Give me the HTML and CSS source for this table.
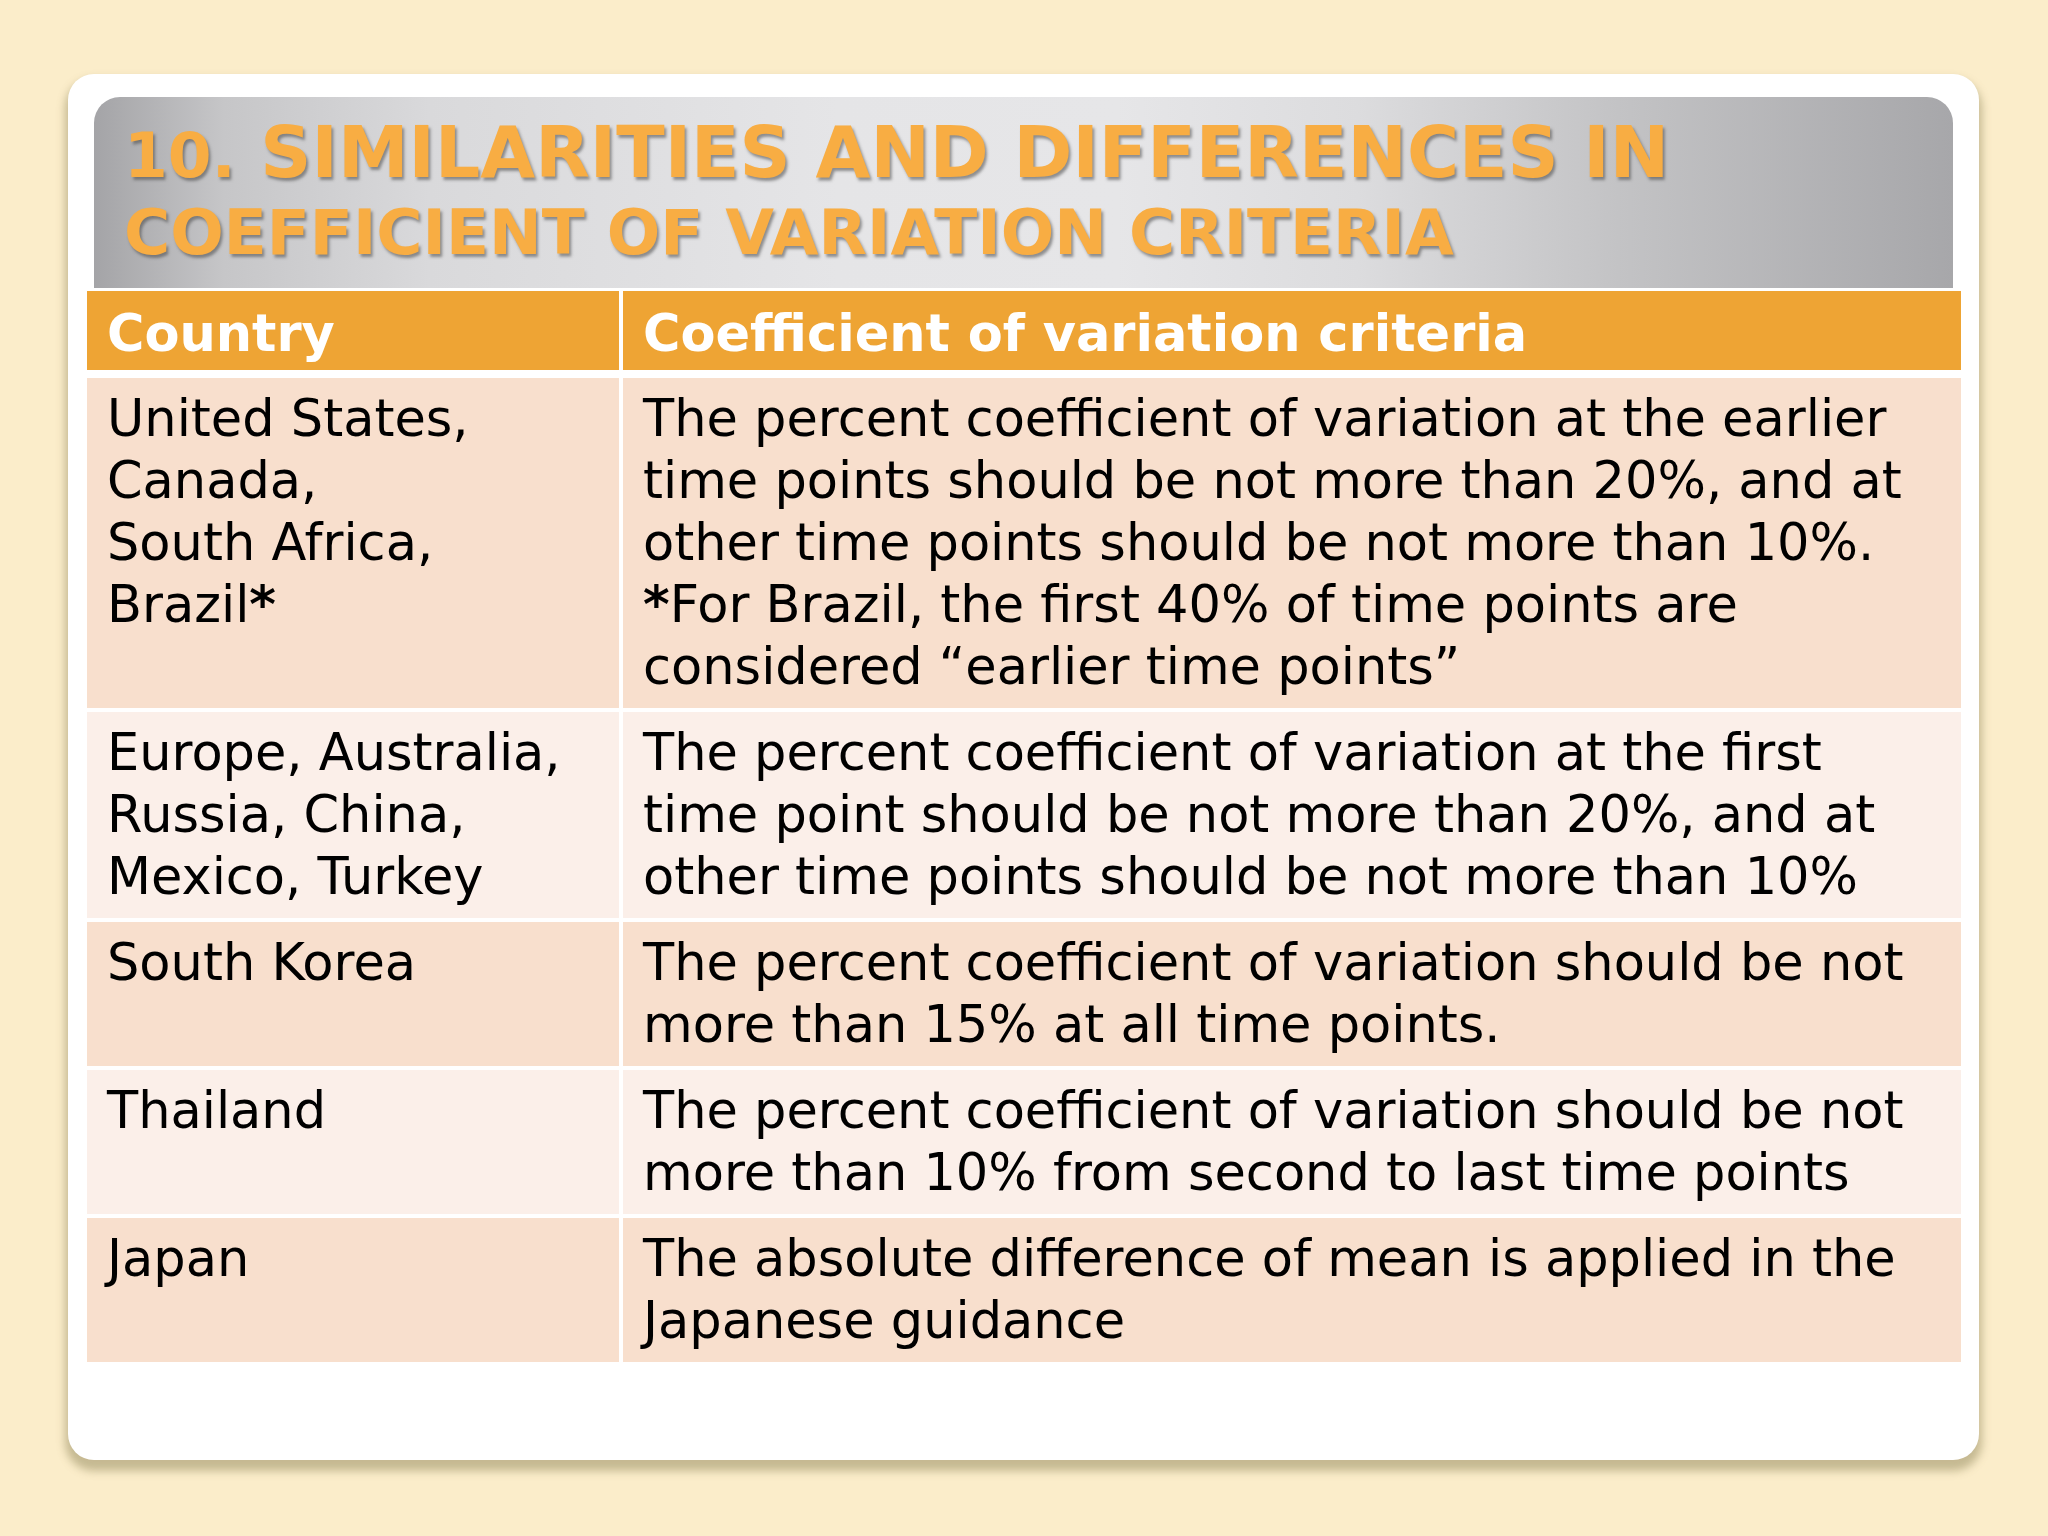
FILE: index.html
```html
<!DOCTYPE html>
<html lang="en">
<head>
<meta charset="utf-8">
<title>10. Similarities and differences in coefficient of variation criteria</title>
<link rel="stylesheet" href="styles.css">
</head>
<body>
<div class="slide">
  <div class="card">
    <div class="title-band">
      <h1 class="title"><span class="line1"><span class="num">10.</span> SIMILARITIES AND DIFFERENCES IN</span><span class="line2">COEFFICIENT OF VARIATION CRITERIA</span></h1>
    </div>
    <div class="table">
      <div class="cell head">Country</div>
      <div class="cell head">Coefficient of variation criteria</div>

      <div class="cell dark">United States,<br>Canada,<br>South Africa,<br>Brazil<b class="star">*</b></div>
      <div class="cell dark">The percent coefficient of variation at the earlier time points should be not more than 20%, and at other time points should be not more than 10%.<br><b class="star">*</b>For Brazil, the first 40% of time points are considered “earlier time points”</div>

      <div class="cell light">Europe, Australia,<br>Russia, China,<br>Mexico, Turkey</div>
      <div class="cell light">The percent coefficient of variation at the first time point should be not more than 20%, and at other time points should be not more than 10%</div>

      <div class="cell dark">South Korea</div>
      <div class="cell dark">The percent coefficient of variation should be not more than 15% at all time points.</div>

      <div class="cell light">Thailand</div>
      <div class="cell light">The percent coefficient of variation should be not more than 10% from second to last time points</div>

      <div class="cell dark">Japan</div>
      <div class="cell dark">The absolute difference of mean is applied in the Japanese guidance</div>
    </div>
  </div>
</div>
</body>
</html>
```
FILE: styles.css
```css
html, body {
  margin: 0;
  padding: 0;
}
body {
  background: #fbedca;
  width: 2048px;
  height: 1536px;
  overflow: hidden;
  font-family: "DejaVu Sans", Verdana, sans-serif;
}
.slide {
  padding: 74px 69px 0 68px;
}
.card {
  width: 1911px;
  height: 1386px;
  box-sizing: border-box;
  background: #ffffff;
  border-radius: 26px;
  padding: 23px 26px 0 26px;
  box-shadow: 0 8px 8px 3px rgba(125, 115, 70, 0.42);
}
.title-band {
  height: 191px;
  box-sizing: border-box;
  border-radius: 26px 26px 0 0;
  padding: 19px 0 0 30px;
  background: linear-gradient(90deg, #a4a4a7 0%, #c6c6c8 7%, #d9d9db 18%, #e5e5e7 40%, #e6e6e8 55%, #dcdcde 68%, #c3c3c5 82%, #a7a7aa 100%);
}
.title {
  margin: 0;
  font-family: "DejaVu Sans", Verdana, sans-serif;
  font-weight: bold;
  color: #f8ad43;
  white-space: nowrap;
  text-shadow: 2px 3px 3px rgba(70, 70, 70, 0.55);
}
.line1 {
  display: block;
  font-size: 71px;
  line-height: 74px;
}
.line2 {
  display: block;
  font-size: 63px;
  line-height: 80px;
}
.title .num {
  font-size: 63px;
}
.table {
  display: grid;
  grid-template-columns: 532px 1338px;
  column-gap: 4px;
  row-gap: 4px;
  margin: 3px -7px 0 -7px;
}
.cell {
  font-size: 51px;
  line-height: 62px;
  color: #000;
  padding: 10px 12px 10px 20px;
}
.head {
  background: #eea434;
  color: #ffffff;
  font-weight: bold;
  padding: 12px 12px 5px 20px;
  margin-bottom: 4px;
}
.dark {
  background: #f8dfcd;
}
.light {
  background: #fbefe9;
}
.star {
  font-weight: bold;
}
```
